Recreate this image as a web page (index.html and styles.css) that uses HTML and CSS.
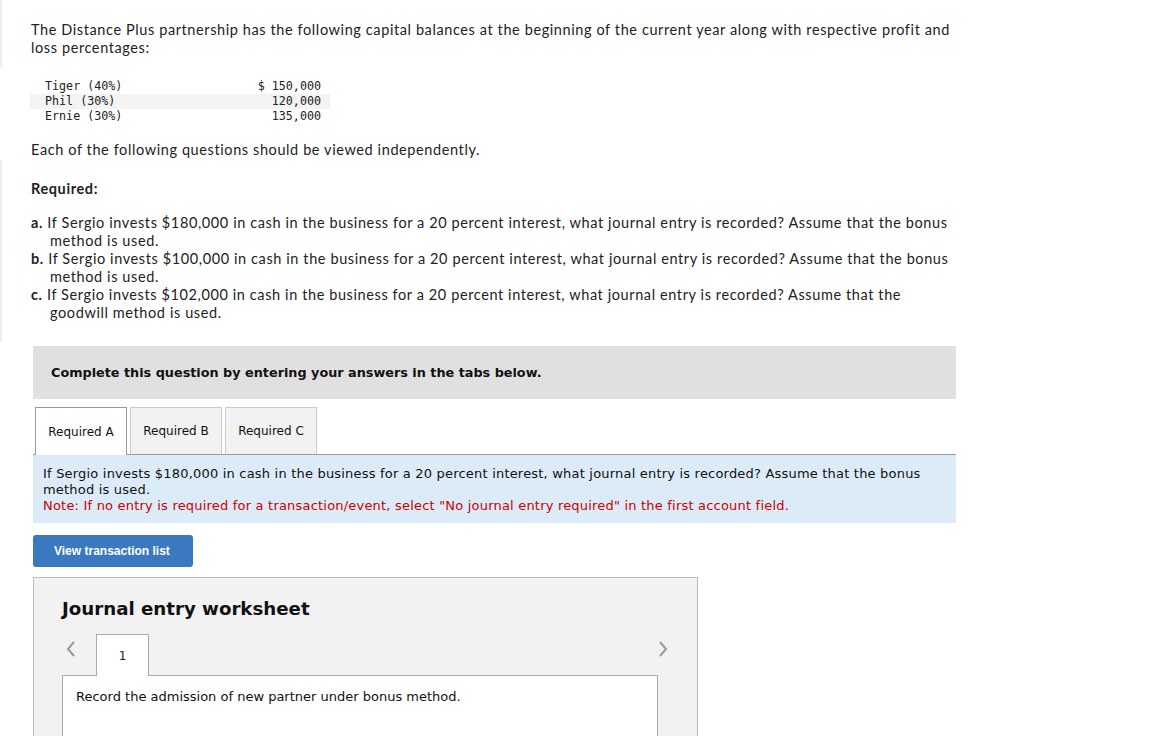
FILE: index.html
```html
<!DOCTYPE html>
<html lang="en">
<head>
    <meta charset="UTF-8">
    <meta name="viewport" content="width=device-width, initial-scale=1.0">
    <title>Partnership question</title>
    <link rel="stylesheet" href="styles.css">
</head>
<body>
    <div class="edge edge-top"></div>
    <div class="edge edge-mid"></div>
    <div class="page">
        <p class="intro">The Distance Plus partnership has the following capital balances at the beginning of the current year along with respective profit and loss percentages:</p>

        <table class="capital">
            <tr><td class="name">Tiger (40%)</td><td class="amt">$ 150,000</td></tr>
            <tr class="shade"><td class="name">Phil (30%)</td><td class="amt">120,000</td></tr>
            <tr><td class="name">Ernie (30%)</td><td class="amt">135,000</td></tr>
        </table>

        <p class="intro each">Each of the following questions should be viewed independently.</p>

        <p class="required">Required:</p>
        <ol class="parts">
            <li><b>a.</b> If Sergio invests $180,000 in cash in the business for a 20 percent interest, what journal entry is recorded? Assume that the bonus method is used.</li>
            <li><b>b.</b> If Sergio invests $100,000 in cash in the business for a 20 percent interest, what journal entry is recorded? Assume that the bonus method is used.</li>
            <li><b>c.</b> If Sergio invests $102,000 in cash in the business for a 20 percent interest, what journal entry is recorded? Assume that the goodwill method is used.</li>
        </ol>

        <div class="answer">
            <div class="banner">Complete this question by entering your answers in the tabs below.</div>

            <div class="tabs">
                <div class="tab active">Required A</div>
                <div class="tab">Required B</div>
                <div class="tab">Required C</div>
            </div>

            <div class="tab-body">
                <div>If Sergio invests $180,000 in cash in the business for a 20 percent interest, what journal entry is recorded? Assume that the bonus method is used.</div>
                <div class="note">Note: If no entry is required for a transaction/event, select "No journal entry required" in the first account field.</div>
            </div>

            <button class="btn">View transaction list</button>

            <div class="worksheet">
                <h2>Journal entry worksheet</h2>
                <div class="ws-nav">
                    <svg class="chev" width="12" height="18" viewBox="0 0 12 18"><path d="M9 2 L3 9 L9 16" fill="none" stroke="#999" stroke-width="2"/></svg>
                    <div class="ws-tab">1</div>
                    <div class="ws-spacer"></div>
                    <svg class="chev next" width="12" height="18" viewBox="0 0 12 18"><path d="M3 2 L9 9 L3 16" fill="none" stroke="#999" stroke-width="2"/></svg>
                </div>
                <div class="ws-body">Record the admission of new partner under bonus method.</div>
            </div>
        </div>
    </div>
</body>
</html>
```

FILE: styles.css
```css
body {
    margin: 0;
    font-family: Lato, "Open Sans", sans-serif;
    font-size: 14.5px;
    letter-spacing: 0.6px;
    color: #222;
    background: #fff;
}

.edge {
    position: absolute;
    left: 0;
    width: 2px;
    background: #eee;
}
.edge-top { top: 0; height: 68px; }
.edge-mid { top: 160px; height: 182px; }

.page {
    width: 926px;
    padding: 21px 0 0 31px;
}

.intro { margin: 0; line-height: 18px; }

.capital {
    margin: 22px 0 0 -1px;
    width: 300px;
    border-collapse: collapse;
    font-family: "DejaVu Sans Mono", monospace;
    font-size: 11.7px;
    letter-spacing: 0;
}
.capital td { padding: 0; height: 15px; line-height: 15px; }
.capital .name { padding-left: 15px; }
.capital .amt { text-align: right; padding-right: 9px; }
.capital .shade { background: #f3f3f3; }

.each { margin-top: 17px; }

.required {
    margin: 21px 0 0;
    font-weight: bold;
    line-height: 18px;
}

.parts {
    list-style: none;
    margin: 16px 0 0;
    padding: 0;
    line-height: 18px;
}
.parts li { padding-left: 19px; text-indent: -19px; }

.answer { margin: 24px 0 0 2px; width: 923px; letter-spacing: 0; }

.banner {
    background: #e0e0e0;
    height: 53px;
    padding-left: 18px;
    display: flex;
    align-items: center;
    font-family: "DejaVu Sans", Verdana, sans-serif;
    font-weight: bold;
    font-size: 12.8px;
    color: #111;
}

.tabs {
    display: flex;
    gap: 3px;
    margin-top: 8px;
    padding-left: 2px;
    border-bottom: 1px solid #999;
}
.tab {
    width: 90px;
    height: 46px;
    display: flex;
    align-items: center;
    justify-content: center;
    border: 1px solid #ccc;
    border-bottom: none;
    background: #f2f2f2;
    font-family: "DejaVu Sans", Verdana, sans-serif;
    font-size: 12px;
    color: #111;
    margin-bottom: -1px;
}
.tab.active {
    background: #fff;
    border-color: #999;
    height: 47px;
}

.tab-body {
    background: #dbebf8;
    padding: 11px 10px 9px;
    line-height: 16px;
    font-family: "DejaVu Sans", Verdana, sans-serif;
    font-size: 13px;
    letter-spacing: 0.2px;
    color: #111;
}
.note { color: #c00; }

.btn {
    display: block;
    margin-top: 12px;
    width: 160px;
    height: 32px;
    border: 0;
    border-radius: 3px;
    background: #3a78bf;
    color: #fff;
    font-family: "Liberation Sans", Arial, sans-serif;
    font-weight: bold;
    font-size: 12px;
    text-align: left;
    padding-left: 21px;
}

.worksheet {
    margin-top: 10px;
    width: 665px;
    height: 200px;
    border: 1px solid #bbb;
    background: #f2f2f2;
    padding: 0 0 0 28px;
    box-sizing: border-box;
}
.worksheet h2 {
    margin: 20px 0 0;
    font-family: "DejaVu Sans", Verdana, sans-serif;
    font-size: 18.2px;
    color: #111;
}
.ws-nav {
    display: flex;
    align-items: flex-start;
    margin-top: 15px;
    width: 607px;
}
.chev { margin: 6px 19px 0 3px; }
.chev.next { margin: 6px 0 0; }
.ws-spacer { flex: 1; }
.ws-tab {
    width: 51px;
    height: 41px;
    display: flex;
    align-items: center;
    justify-content: center;
    background: #fff;
    border: 1px solid #aaa;
    border-bottom: none;
    font-family: "DejaVu Sans", Verdana, sans-serif;
    font-size: 12px;
    margin-bottom: -1px;
    position: relative;
}
.ws-body {
    width: 596px;
    height: 80px;
    background: #fff;
    border: 1px solid #aaa;
    padding: 13px 0 0 13px;
    box-sizing: border-box;
    font-family: "DejaVu Sans", Verdana, sans-serif;
    font-size: 13px;
    color: #111;
}
```
